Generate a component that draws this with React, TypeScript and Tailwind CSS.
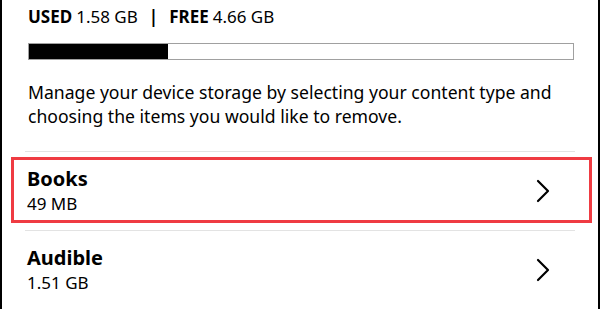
const font = { fontFamily: '"Noto Sans", "Open Sans", sans-serif' };

function Chevron() {
  return (
    <svg width="14" height="24" viewBox="0 0 14 24" className="shrink-0 self-center">
      <path d="M2 2 L12 12 L2 22" fill="none" stroke="#000" strokeWidth="2.2" strokeLinecap="round" strokeLinejoin="round" />
    </svg>
  );
}

function StorageRow({ title, size, highlighted }: { title: string; size: string; highlighted?: boolean }) {
  return (
    <div className="relative flex h-[79px] items-start justify-between border-t-[1.5px] border-[#e3e3e3] pl-[2px] pr-[25px]">
      <div className="flex flex-col pt-[15px]">
        <span className="text-[20px] font-bold leading-[24px] text-black">{title}</span>
        <span className="text-[17px] leading-[25px] text-black">{size}</span>
      </div>
      <Chevron />
      {highlighted && (
        <div className="pointer-events-none absolute top-[5px] bottom-[7px] -left-[14px] -right-[17px] border-[3px] border-[#ef3b42]" />
      )}
    </div>
  );
}

export default function App() {
  return (
    <div className="h-[309px] w-[600px] overflow-hidden border-x-2 border-black bg-white" style={font}>
      <div className="px-[23px]">
        {/* Storage summary */}
        <div className="pl-[3px] pt-[5px] text-[17px] leading-[24px] text-black">
          <span className="font-bold">USED</span>
          <span className="ml-[4px]">1.58 GB</span>
          <span className="mx-[11px] font-bold">|</span>
          <span className="font-bold">FREE</span>
          <span className="ml-[4px]">4.66 GB</span>
        </div>

        <div className="ml-[3px] mr-[1px] mt-[14px] h-[17px] border-[1.5px] border-[#a0a0a0] bg-white">
          <div className="h-full w-[25.5%] bg-black" />
        </div>

        <p className="mt-[20px] pl-[3px] text-[17.6px] leading-[24px] text-black">
          Manage your device storage by selecting your content type and choosing the items you would like to remove.
        </p>

        <div className="mt-[23px]">
          <StorageRow title="Books" size="49 MB" highlighted />
          <StorageRow title="Audible" size="1.51 GB" />
        </div>
      </div>
    </div>
  );
}
